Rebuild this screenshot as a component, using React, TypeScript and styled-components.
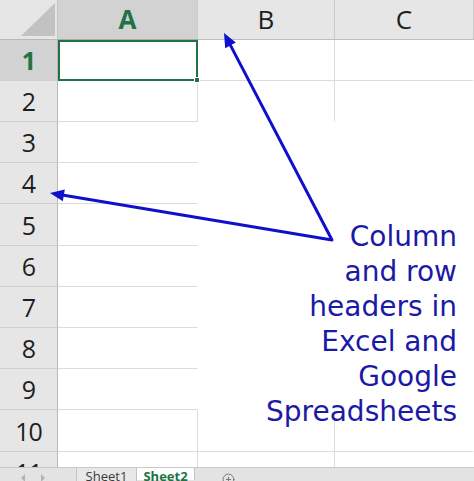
import React from "react";
import styled, { createGlobalStyle } from "styled-components";
import { CirclePlus } from "lucide-react";

const GREEN = "#217346";
const HEAD_BG = "#e6e6e6";
const HEAD_SEL = "#d2d2d2";
const GRID = "#dcdcdc";
const ROW_HEIGHTS = [41, 41, 41, 41, 42, 41, 41, 41, 41, 42, 41];

const Global = createGlobalStyle`
  html, body { margin: 0; padding: 0; background: #fff; }
  * { box-sizing: border-box; }
`;

const Frame = styled.div`
  position: relative;
  width: 474px;
  height: 481px;
  overflow: hidden;
  background: #fff;
  font-family: "Open Sans", "Liberation Sans", sans-serif;
  display: flex;
  flex-direction: column;
`;

const Sheet = styled.div`
  display: grid;
  grid-template-columns: 58px 140px 137px 139px;
  grid-template-rows: 40px ${ROW_HEIGHTS.map((h) => `${h}px`).join(" ")};
  height: 467px;
  overflow: hidden;
  flex: none;
`;

const Corner = styled.div`
  background: ${HEAD_BG};
  border-right: 1px solid #c4c4c4;
  border-bottom: 1px solid #b8b8b8;
  display: flex;
  align-items: flex-end;
  justify-content: flex-end;
  padding: 0 1px 2px 0;
`;

const ColHeader = styled.div<{ $selected?: boolean }>`
  background: ${(p) => (p.$selected ? HEAD_SEL : HEAD_BG)};
  color: ${(p) => (p.$selected ? GREEN : "#1e1e1e")};
  font-weight: ${(p) => (p.$selected ? 700 : 400)};
  font-size: 26px;
  border-right: 1px solid #cacaca;
  border-bottom: 1px solid ${(p) => (p.$selected ? "#a8a8a8" : "#bdbdbd")};
  display: flex;
  align-items: center;
  justify-content: center;
  padding-bottom: 1px;
`;

const RowHeader = styled.div<{ $selected?: boolean }>`
  background: ${(p) => (p.$selected ? HEAD_SEL : HEAD_BG)};
  color: ${(p) => (p.$selected ? GREEN : "#1e1e1e")};
  font-weight: ${(p) => (p.$selected ? 700 : 400)};
  font-size: 25px;
  border-right: 1px solid #b8b8b8;
  border-bottom: 1px solid #d0d0d0;
  display: flex;
  align-items: center;
  justify-content: center;
  letter-spacing: -1px;
`;

const Cell = styled.div<{ $right?: boolean; $bottom?: boolean }>`
  background: #fff;
  border-right: 1px solid ${(p) => (p.$right ? GRID : "transparent")};
  border-bottom: 1px solid ${(p) => (p.$bottom ? GRID : "transparent")};
`;

const ActiveCell = styled.div`
  position: relative;
  background: #fff;
  border: 2px solid ${GREEN};
`;

const FillHandle = styled.span`
  position: absolute;
  right: -4px;
  bottom: -4px;
  width: 6px;
  height: 6px;
  background: ${GREEN};
  border: 1px solid #fff;
`;

const TabBar = styled.div`
  flex: 1;
  display: flex;
  align-items: flex-start;
  background: #e3e3e3;
  border-top: 1px solid #c8c8c8;
  overflow: hidden;
  font-size: 13px;
`;

const NavArea = styled.div`
  width: 77px;
  height: 100%;
  display: flex;
  align-items: flex-start;
  gap: 14px;
  padding: 6px 0 0 20px;
  color: #b4b4b4;
  border-right: 1px solid #c4c4c4;
`;

const Tab = styled.div<{ $active?: boolean }>`
  width: ${(p) => (p.$active ? 58 : 60)}px;
  height: 100%;
  margin-top: ${(p) => (p.$active ? -1 : 0)}px;
  background: ${(p) => (p.$active ? "#fff" : "#e8e8e8")};
  color: ${(p) => (p.$active ? GREEN : "#3a3a3a")};
  font-weight: ${(p) => (p.$active ? 700 : 400)};
  border-right: 1px solid #c4c4c4;
  display: flex;
  justify-content: center;
  line-height: 13px;
  padding-top: ${(p) => (p.$active ? 3 : 2)}px;
`;

const AddSheet = styled.div`
  margin-left: 27px;
  margin-top: 5px;
  color: #6a6a6a;
  display: flex;
`;

const Overlay = styled.svg`
  position: absolute;
  inset: 0;
  pointer-events: none;
`;

const Note = styled.div`
  position: absolute;
  right: 17px;
  top: 219px;
  text-align: right;
  color: #1a1aa6;
  font-family: "DejaVu Sans", Verdana, sans-serif;
  font-size: 28px;
  line-height: 35px;
  white-space: nowrap;
`;

type Vis = { aRight: boolean; aBottom: boolean; bRight: boolean; bBottom: boolean; cBottom: boolean };

const visFor = (r: number): Vis => {
  if (r === 2) return { aRight: true, aBottom: true, bRight: true, bBottom: false, cBottom: false };
  if (r === 10) return { aRight: true, aBottom: true, bRight: true, bBottom: true, cBottom: true };
  if (r === 11) return { aRight: true, aBottom: false, bRight: true, bBottom: false, cBottom: false };
  return { aRight: false, aBottom: true, bRight: false, bBottom: false, cBottom: false };
};

const NavArrow = ({ dir }: { dir: "left" | "right" }) => (
  <svg width="6" height="8" viewBox="0 0 6 8">
    <polygon points={dir === "left" ? "5,0 5,8 1,4" : "1,0 1,8 5,4"} fill="currentColor" />
  </svg>
);

export default function App() {
  const rows = ROW_HEIGHTS.map((_, i) => i + 1);
  return (
    <Frame>
      <Global />
      <Sheet>
        <Corner>
          <svg width="36" height="34" viewBox="0 0 36 34">
            <polygon points="1,33 35,33 35,0" fill="#c2c2c2" />
          </svg>
        </Corner>
        <ColHeader $selected>A</ColHeader>
        <ColHeader>B</ColHeader>
        <ColHeader>C</ColHeader>
        {rows.map((r) => {
          if (r === 1) {
            return (
              <React.Fragment key={r}>
                <RowHeader $selected>1</RowHeader>
                <ActiveCell>
                  <FillHandle />
                </ActiveCell>
                <Cell $right $bottom />
                <Cell $bottom />
              </React.Fragment>
            );
          }
          const v = visFor(r);
          return (
            <React.Fragment key={r}>
              <RowHeader>{r}</RowHeader>
              <Cell $right={v.aRight} $bottom={v.aBottom} />
              <Cell $right={v.bRight} $bottom={v.bBottom} />
              <Cell $bottom={v.cBottom} />
            </React.Fragment>
          );
        })}
      </Sheet>
      <TabBar>
        <NavArea>
          <NavArrow dir="left" />
          <NavArrow dir="right" />
        </NavArea>
        <Tab>Sheet1</Tab>
        <Tab $active>Sheet2</Tab>
        <AddSheet>
          <CirclePlus size={13} strokeWidth={1.6} />
        </AddSheet>
      </TabBar>
      <Overlay width="474" height="481" viewBox="0 0 474 481">
        <g stroke="#1010cc" strokeWidth="3" fill="none" strokeLinecap="round" strokeLinejoin="round">
          <polyline points="230.5,45.4 332,240 63.8,195.3" />
        </g>
        <polygon points="224,33 235.8,42.6 225.2,48.2" fill="#1010cc" />
        <polygon points="50,193 64.8,189.4 62.8,201.2" fill="#1010cc" />
      </Overlay>
      <Note>
        Column
        <br />
        and row
        <br />
        headers in
        <br />
        Excel and
        <br />
        Google
        <br />
        Spreadsheets
      </Note>
    </Frame>
  );
}
